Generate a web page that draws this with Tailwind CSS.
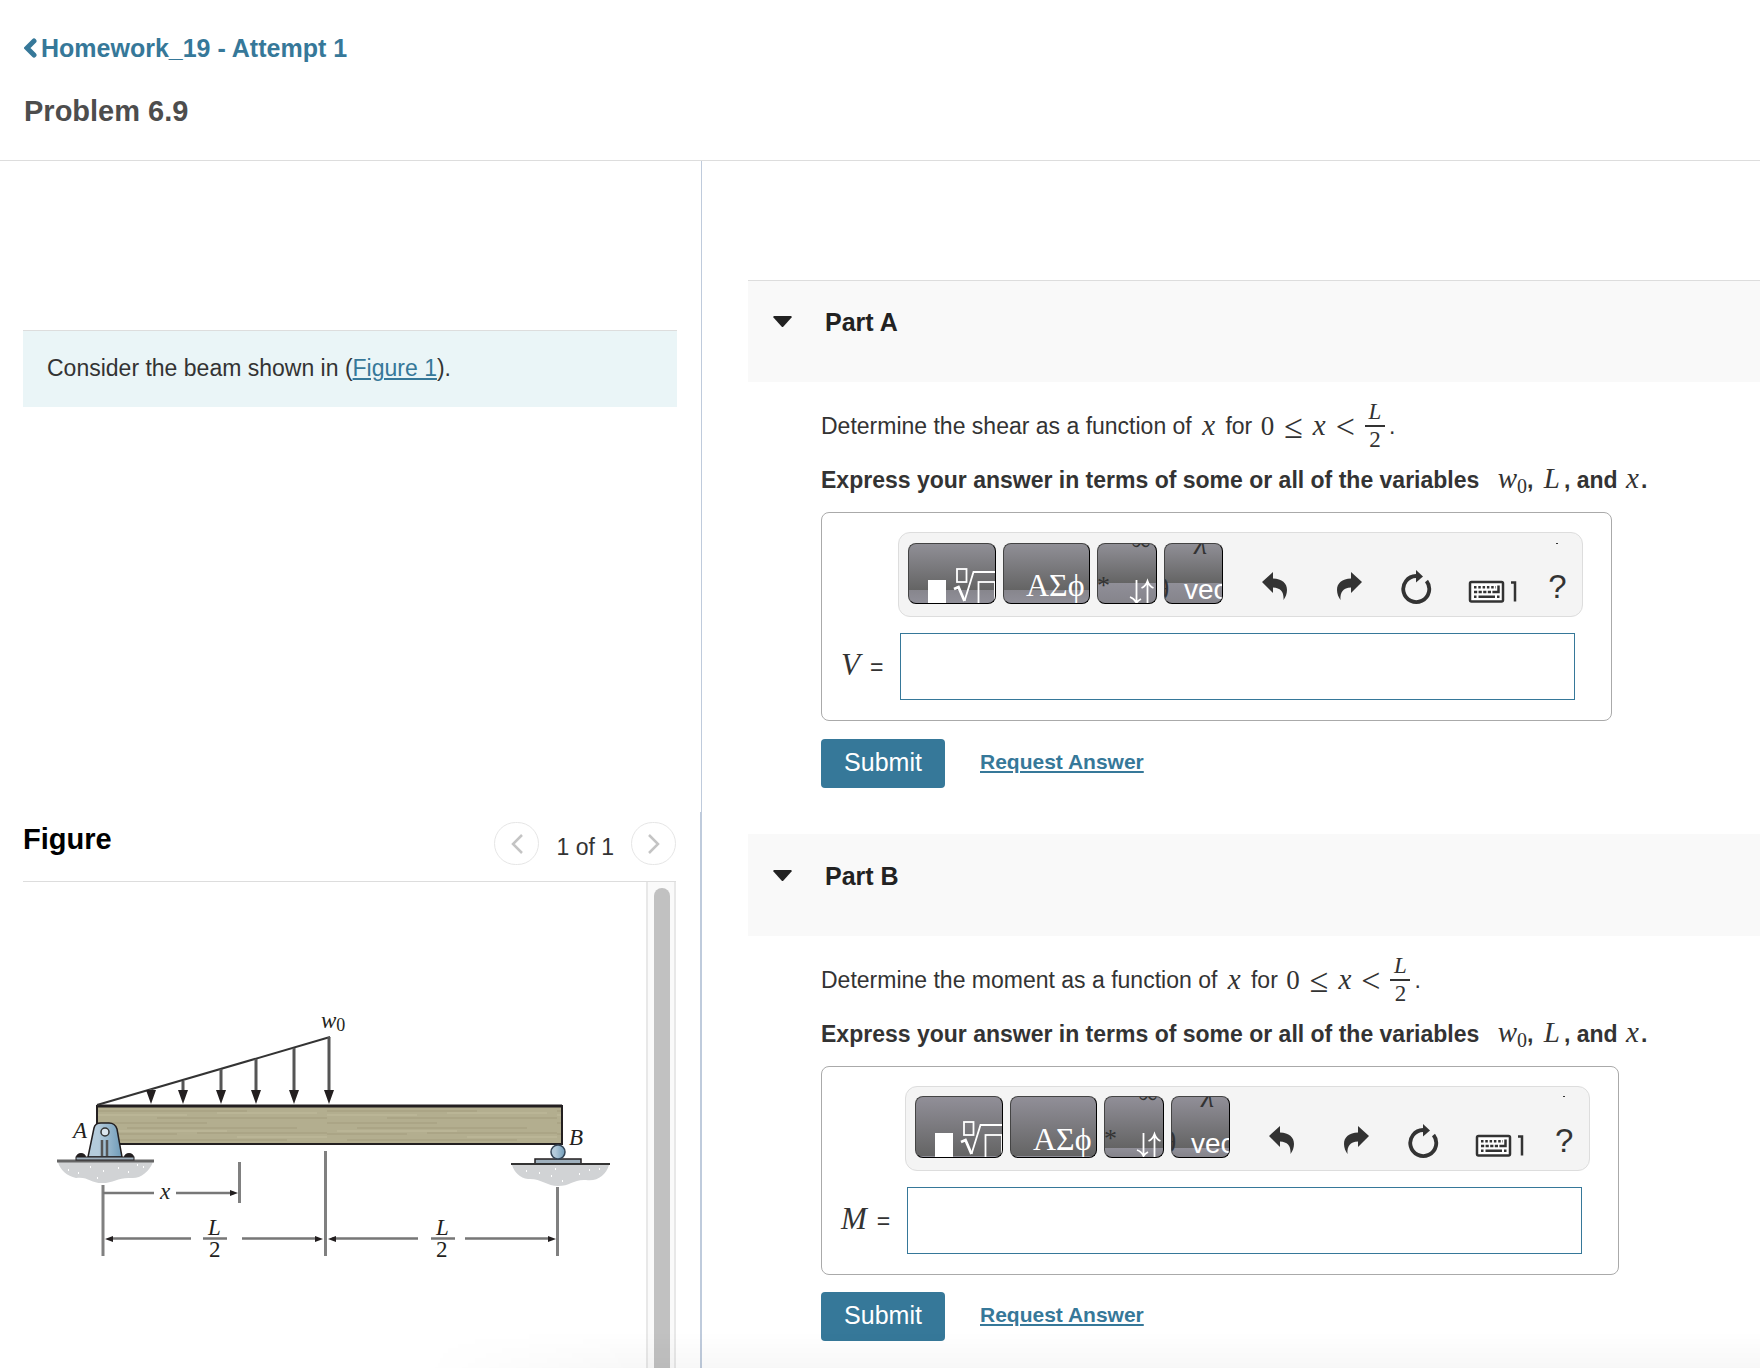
<!DOCTYPE html>
<html lang="en">
  <head>
    <meta charset="utf-8" />
    <meta name="viewport" content="width=device-width, initial-scale=1.0" />
    <title>Problem 6.9</title>
    <script src="https://cdn.jsdelivr.net/npm/@tailwindcss/browser@4"></script>
  </head>
  <body class="flex flex-col h-screen overflow-hidden bg-white font-['Liberation_Sans',Arial,sans-serif] text-[23px] text-[#333]">
    <!-- Shared icons -->
    <svg class="hidden">
      <symbol id="undo" viewBox="0 0 26 28">
        <path d="M0 10 11 0V6.500C20 7 25 11 25 18C25 22 23.500 25 21.500 28C22 20 19 16 11 15.500V21Z" fill="#333" />
      </symbol>
      <symbol id="reset" viewBox="0 0 32 36">
        <path d="M16 7A13 13 0 1 0 26.500 12" fill="none" stroke="#333" stroke-width="3.800" />
        <path d="M16 1 23 7.500 16 13.500Z" fill="#333" />
      </symbol>
      <symbol id="keyboard" viewBox="0 0 50 23">
        <rect x="2" y="2" width="33" height="19.500" rx="1.500" fill="#fff" stroke="#333" stroke-width="2.500" />
        <path d="M6 7.200H28" stroke="#333" stroke-width="2.500" stroke-dasharray="2.500 1.800" />
        <path d="M6 12H26" stroke="#333" stroke-width="2.500" stroke-dasharray="3.200 1.400" />
        <path d="M30.500 5.500V12H26" fill="none" stroke="#333" stroke-width="2.500" />
        <path d="M6 16.800H8.500M10.500 16.800H27M29 16.800H31.500" stroke="#333" stroke-width="2.500" />
        <path d="M43 2.500H47V21.500" fill="none" stroke="#333" stroke-width="2.500" />
      </symbol>
      <symbol id="root" viewBox="0 0 88 61">
        <rect x="19" y="36" width="18" height="26" fill="#fff" />
        <g fill="none" stroke="#fff" stroke-width="1.800">
          <rect x="48" y="25" width="9.500" height="13" />
          <path d="M88 28H64.500L55.500 57" />
          <path d="M45 45 49.500 43 55.500 57" stroke-width="2.800" />
          <rect x="69.500" y="38" width="16.500" height="26" />
        </g>
      </symbol>
      <symbol id="arrows" viewBox="0 0 60 61">
        <g fill="none" stroke="#fff" stroke-width="1.800">
          <path d="M38.500 36V59M32 53C35 54 37 56 38.500 59C39.500 57 41 56 43 55" />
          <path d="M49.500 61V37M43.500 44C46 43 48.500 40 49.500 37C50.500 40 53 43 55.500 44" />
        </g>
      </symbol>
    </svg>

    <header class="border-b border-[#ddd] px-6 pt-8 pb-[31px]">
      <a href="#" class="flex items-center gap-1 text-[25px] leading-8 font-bold text-[#367899]">
        <svg class="w-[13px] h-[22px]" viewBox="0 0 13 22"><path d="M10 4 3 11 10 18" fill="none" stroke="currentColor" stroke-width="5" stroke-linecap="round" /></svg>
        Homework_19 - Attempt 1
      </a>
      <h1 class="mt-[29px] text-[29px] leading-9 font-bold text-[#4d4d4d]">Problem 6.9</h1>
    </header>

    <main class="grid grid-cols-[702fr_1058fr] flex-1 min-h-0">
      <!-- Left side -->
      <div class="grid grid-rows-[651fr_556fr] min-h-0">
        <section class="border-r border-[#bfcbdc] pl-[23px] pr-6 pt-[169px]">
          <p class="border-t border-[#ddd] bg-[#eaf5f7] px-6 pt-[21px] pb-[23px] leading-8">
            Consider the beam shown in (<a href="#figure" class="text-[#367899] underline decoration-2 underline-offset-2">Figure 1</a>).
          </p>
        </section>

        <section id="figure" class="flex flex-col min-h-0 border-r-2 border-[#bfcbdc] pl-[23px] pr-6">
          <div class="flex items-start justify-between h-[69px] shrink-0 pt-[9px]">
            <h2 class="text-[29px] leading-9 font-bold text-black">Figure</h2>
            <div class="flex items-center gap-[17px] pt-px">
              <button aria-label="Previous figure" class="flex items-center justify-center w-[45px] h-[43px] border border-[#e6e6e6] rounded-full">
                <svg class="w-3 h-5" viewBox="0 0 12 20"><path d="M11 1 2 10 11 19" fill="none" stroke="#c4c4c4" stroke-width="2.500" /></svg>
              </button>
              <span class="pt-[7px]">1 of 1</span>
              <button aria-label="Next figure" class="flex items-center justify-center w-[45px] h-[43px] border border-[#e6e6e6] rounded-full">
                <svg class="w-3 h-5" viewBox="0 0 12 20"><path d="M1 1 10 10 1 19" fill="none" stroke="#c4c4c4" stroke-width="2.500" /></svg>
              </button>
            </div>
          </div>
          <div class="flex flex-1 min-h-0 border-t border-[#ddd]">
            <!-- Beam diagram -->
            <div class="flex-1 min-w-0 overflow-hidden">
              <svg class="w-full" viewBox="23 882 623 400" font-family="Liberation Serif, serif" font-size="23" font-style="italic" fill="#231f20">
                <defs>
                  <pattern id="wood" x="97" y="1106" width="230" height="39" patternUnits="userSpaceOnUse">
                    <rect width="230" height="39" fill="#b3ae8f" />
                    <path d="M0 5H150M60 12H230M0 17H110M30 22H200M0 28H80M100 27H230M20 34H190" stroke="#a39d7d" stroke-width="1" />
                    <path d="M0 9H90M120 7H220M10 25H130M140 31H230" stroke="#bdb898" stroke-width="1.500" />
                  </pattern>
                  <linearGradient id="steel"><stop offset="0.300" stop-color="#b4cbdb" /><stop offset="1" stop-color="#6f9bb8" /></linearGradient>
                </defs>
                <rect x="97" y="1106" width="465" height="38" fill="url(#wood)" stroke="#231f20" stroke-width="2" />
                <path d="M97 1106H562" stroke="#231f20" stroke-width="3" />

                <!-- Distributed load -->
                <path d="M97 1105 330 1037" stroke="#333" stroke-width="2" />
                <path d="M151 1089V1095M183 1081V1095M221 1069V1095M256 1059V1095M294 1048V1095M329 1037V1095" stroke="#555" stroke-width="3" />
                <path d="M146 1090h10l-5 14zM178 1090h10l-5 14zM216 1090h10l-5 14zM251 1090h10l-5 14zM289 1090h10l-5 14zM324 1090h10l-5 14z" />
                <text x="321" y="1028">w<tspan font-size="18" font-style="normal" dy="3">0</tspan></text>

                <!-- Pin support -->
                <path d="M58 1162H153C149 1172 140 1179 131 1178C119 1177 114 1183 102 1183C91 1183 87 1176 76 1178C67 1176 60 1170 58 1162Z" fill="#d1d3d5" />
                <path d="M68 1170h1M78 1173h1M90 1167h1M97 1178h1M103 1171h1M118 1168h1M128 1172h1M137 1165h1M143 1167h1" stroke="#fff" stroke-width="2" />
                <path d="M57 1161H154" stroke="#666" stroke-width="3" />
                <path d="M76 1157a5 4 0 0 1 10 0zM124 1157a5 4 0 0 1 10 0z" />
                <path d="M88 1157 94 1128Q95 1123 101 1123H109Q115 1123 117 1129L122 1157Z" fill="url(#steel)" stroke="#231f20" stroke-width="1.500" />
                <circle cx="105" cy="1132" r="4" fill="#dce6ee" stroke="#333" stroke-width="1.500" />
                <path d="M102 1156V1140M107 1156V1140" stroke="#555" stroke-width="2.500" />
                <rect x="76" y="1157" width="58" height="3" fill="#9fb0bd" stroke="#231f20" />
                <text x="73" y="1138">A</text>

                <!-- Roller support -->
                <path d="M512 1165H609C606 1175 597 1182 586 1180C574 1179 570 1186 558 1186C547 1186 540 1178 528 1179C520 1178 514 1172 512 1165Z" fill="#d1d3d5" />
                <path d="M526 1171h1M539 1173h1M555 1169h1M551 1176h1M562 1181h1M579 1174h1M589 1170h1M599 1169h1" stroke="#fff" stroke-width="2" />
                <rect x="535" y="1159" width="46" height="5" fill="#9fb0bd" stroke="#231f20" stroke-width="1.500" />
                <path d="M511 1164H610" stroke="#333" stroke-width="2" />
                <circle cx="558" cy="1152" r="7" fill="url(#steel)" stroke="#345" stroke-width="1.500" />
                <text x="569" y="1145">B</text>

                <!-- Dimensions -->
                <path d="M103 1185V1256M239.500 1162V1203M325.500 1151V1256M557.500 1187V1256" stroke="#808080" stroke-width="3" />
                <path d="M103 1193H154M176 1193H234M110 1238.500H191M242 1238.500H318M332 1238.500H418M465 1238.500H551" stroke="#777" stroke-width="2.500" />
                <path d="M238 1193l-8-3v6zM105 1239l8-3v6zM323 1239l-8-3v6zM328 1239l8-3v6zM556 1239l-8-3v6z" />
                <path d="M203 1238.500H227M431 1238.500H455" stroke="#777" stroke-width="2.500" />
                <text x="160" y="1199">x</text>
                <text x="208" y="1235">L</text>
                <text x="209" y="1257" font-style="normal">2</text>
                <text x="436" y="1235">L</text>
                <text x="436" y="1257" font-style="normal">2</text>
              </svg>
            </div>
            <!-- Scrollbar -->
            <div class="flex w-[30px] border-x-2 border-[#e8e8e8] bg-[#fafafa] pl-[6px] pt-[6px]">
              <div class="w-4 rounded-t-full bg-[#c1c1c1]"></div>
            </div>
          </div>
        </section>
      </div>

      <!-- Right side -->
      <div class="min-h-0 overflow-hidden pl-[46px] pt-[119px]">
        <section>
          <h2 class="flex h-[102px] gap-[33px] border-t border-[#ddd] bg-[#f9f9f9] pl-[25px] pt-[25px] text-[25px] leading-8 font-bold text-[#222]">
            <svg class="w-[19px] h-[11px] mt-[10px]" viewBox="0 0 19 11"><path d="M1 0H18L19 1 10 11H9L0 1Z" fill="#222" /></svg>
            Part A
          </h2>
          <div class="pl-[73px]">
            <p class="flex items-center h-[72px] mt-2 whitespace-pre">Determine the shear as a function of <i class="px-1 font-['Liberation_Serif',serif] text-[29px]">x</i> for <span class="flex items-center gap-[10px] pl-[2px] pr-1 font-['Liberation_Serif',serif] text-[27px]"><span>0</span><span class="text-[34px]">≤</span><i class="text-[29px]">x</i><span class="text-[34px]">&lt;</span><span class="flex flex-col items-center w-5 text-[23px] leading-[26px]"><i class="w-full border-b-2 border-[#333] text-center">L</i><span>2</span></span></span>.</p>
            <p class="leading-9 font-bold whitespace-nowrap">Express your answer in terms of some or all of the variables <span class="ml-3 font-['Liberation_Serif',serif] text-[29px] leading-none font-normal"><i>w</i><sub class="text-[20px]">0</sub></span>, <i class="mx-1 font-['Liberation_Serif',serif] text-[29px] leading-none font-normal">L</i>, and <i class="mx-[2px] font-['Liberation_Serif',serif] text-[29px] leading-none font-normal">x</i>.</p>

            <form class="grid grid-cols-[auto_685px] gap-x-[15px] gap-y-4 w-fit mt-[14px] border border-[#aaa] rounded-lg pl-[19px] pr-7 pt-[19px] pb-5">
              <div class="col-start-2 flex h-[85px] border border-[#ddd] rounded-xl bg-[#f4f4f4] pl-[9px] pt-[10px]">
                <div class="flex gap-[7px] mr-[15px]">
                  <button type="button" aria-label="Templates" class="w-[88px] h-[61px] overflow-hidden border border-black border-t-[#444] border-l-[#444] rounded-lg bg-[linear-gradient(#908f96_0,#646464_46px,#87868d_46px,#908f98_100%)]">
                    <svg class="w-full h-full"><use href="#root" width="88" height="61" /></svg>
                  </button>
                  <button type="button" class="w-[87px] h-[61px] overflow-hidden border border-black border-t-[#444] border-l-[#444] rounded-lg bg-[linear-gradient(#908f96_0,#646464_46px,#87868d_46px,#908f98_100%)]">
                    <svg class="w-full h-full" font-family="Liberation Serif, serif" font-size="32" fill="#fff"><text x="22" y="52">ΑΣϕ</text></svg>
                  </button>
                  <button type="button" aria-label="Arrows" class="w-[60px] h-[61px] overflow-hidden border border-black border-t-[#444] border-l-[#444] rounded-lg bg-[linear-gradient(#908f96_0,#646464_39px,#908f98_39px,#85848b_100%)]">
                    <svg class="w-full h-full" font-family="Liberation Serif, serif" font-size="28" fill="#333"><text x="33" y="6">∞</text><text x="-1" y="50" font-size="26">*</text><use href="#arrows" width="60" height="61" /></svg>
                  </button>
                  <button type="button" class="w-[59px] h-[61px] overflow-hidden border border-black border-t-[#444] border-l-[#444] rounded-lg bg-[linear-gradient(#908f96_0,#646464_39px,#908f98_39px,#85848b_100%)]">
                    <svg class="w-full h-full" font-family="Liberation Serif, serif" font-size="30" fill="#333"><text x="29" y="10" font-style="italic">λ</text><text x="-10" y="55">θ</text><text x="19" y="55" font-family="Liberation Sans, sans-serif" font-size="28" fill="#fff">vec</text></svg>
                  </button>
                </div>
                <button type="button" aria-label="Undo" class="flex justify-center w-[74px] pt-[29px]"><svg class="w-[26px] h-7"><use href="#undo" /></svg></button>
                <button type="button" aria-label="Redo" class="flex justify-center w-[73px] pt-[29px]"><svg class="w-[26px] h-7 -scale-x-100"><use href="#undo" /></svg></button>
                <button type="button" aria-label="Reset" class="flex justify-center w-[62px] pt-[26px]"><svg class="w-8 h-9"><use href="#reset" /></svg></button>
                <button type="button" aria-label="Keyboard shortcuts" class="flex justify-center w-[92px] pt-[37px]"><svg class="w-[50px] h-[23px]"><use href="#keyboard" /></svg></button>
                <button type="button" class="flex flex-col items-center w-9 text-[33px] leading-10"><span class="w-[2px] h-px mb-[23px] bg-[#333]"></span>?</button>
              </div>
              <label for="answer-v" class="flex items-center gap-[10px]"><i class="pb-[2px] font-['Liberation_Serif',serif] text-[31px]">V</i><span class="pt-[2px]">=</span></label>
              <input id="answer-v" type="text" class="h-[67px] ml-[2px] mr-2 border border-[#367899] bg-white px-3" />
            </form>

            <div class="flex gap-[35px] mt-[18px]">
              <button class="w-[124px] h-[49px] rounded bg-[#367899] pb-[2px] text-[25px] text-white">Submit</button>
              <a href="#" class="pt-[5px] text-[21px] leading-9 font-bold text-[#367899] underline decoration-2 underline-offset-2">Request Answer</a>
            </div>
          </div>
        </section>

        <section class="mt-[46px]">
          <h2 class="flex h-[102px] gap-[33px] bg-[#f9f9f9] pl-[25px] pt-[26px] text-[25px] leading-8 font-bold text-[#222]">
            <svg class="w-[19px] h-[11px] mt-[10px]" viewBox="0 0 19 11"><path d="M1 0H18L19 1 10 11H9L0 1Z" fill="#222" /></svg>
            Part B
          </h2>
          <div class="pl-[73px]">
            <p class="flex items-center h-[72px] mt-2 whitespace-pre">Determine the moment as a function of <i class="px-1 font-['Liberation_Serif',serif] text-[29px]">x</i> for <span class="flex items-center gap-[10px] pl-[2px] pr-1 font-['Liberation_Serif',serif] text-[27px]"><span>0</span><span class="text-[34px]">≤</span><i class="text-[29px]">x</i><span class="text-[34px]">&lt;</span><span class="flex flex-col items-center w-5 text-[23px] leading-[26px]"><i class="w-full border-b-2 border-[#333] text-center">L</i><span>2</span></span></span>.</p>
            <p class="leading-9 font-bold whitespace-nowrap">Express your answer in terms of some or all of the variables <span class="ml-3 font-['Liberation_Serif',serif] text-[29px] leading-none font-normal"><i>w</i><sub class="text-[20px]">0</sub></span>, <i class="mx-1 font-['Liberation_Serif',serif] text-[29px] leading-none font-normal">L</i>, and <i class="mx-[2px] font-['Liberation_Serif',serif] text-[29px] leading-none font-normal">x</i>.</p>

            <form class="grid grid-cols-[auto_685px] gap-x-[15px] gap-y-4 w-fit mt-[14px] border border-[#aaa] rounded-lg pl-[19px] pr-7 pt-[19px] pb-5">
              <div class="col-start-2 flex h-[85px] border border-[#ddd] rounded-xl bg-[#f4f4f4] pl-[9px] pt-[9px]">
                <div class="flex gap-[7px] mr-[15px]">
                  <button type="button" aria-label="Templates" class="w-[88px] h-[62px] overflow-hidden border border-black border-t-[#444] border-l-[#444] rounded-lg bg-[linear-gradient(#918f98_0,#646464_59px,#908f98_59px)]">
                    <svg class="w-full h-full"><use href="#root" width="88" height="61" /></svg>
                  </button>
                  <button type="button" class="w-[87px] h-[62px] overflow-hidden border border-black border-t-[#444] border-l-[#444] rounded-lg bg-[linear-gradient(#918f98_0,#646464_59px,#908f98_59px)]">
                    <svg class="w-full h-full" font-family="Liberation Serif, serif" font-size="32" fill="#fff"><text x="22" y="53">ΑΣϕ</text></svg>
                  </button>
                  <button type="button" aria-label="Arrows" class="w-[60px] h-[62px] overflow-hidden border border-black border-t-[#444] border-l-[#444] rounded-lg bg-[linear-gradient(#918f98_0,#646464_51px,#908f98_51px,#85848b_100%)]">
                    <svg class="w-full h-full" font-family="Liberation Serif, serif" font-size="28" fill="#333"><text x="33" y="6">∞</text><text x="-1" y="50" font-size="26">*</text><use href="#arrows" width="60" height="61" /></svg>
                  </button>
                  <button type="button" class="w-[59px] h-[62px] overflow-hidden border border-black border-t-[#444] border-l-[#444] rounded-lg bg-[linear-gradient(#918f98_0,#646464_51px,#908f98_51px,#85848b_100%)]">
                    <svg class="w-full h-full" font-family="Liberation Serif, serif" font-size="30" fill="#333"><text x="29" y="10" font-style="italic">λ</text><text x="-10" y="55">θ</text><text x="19" y="56" font-family="Liberation Sans, sans-serif" font-size="28" fill="#fff">vec</text></svg>
                  </button>
                </div>
                <button type="button" aria-label="Undo" class="flex justify-center w-[74px] pt-[30px]"><svg class="w-[26px] h-7"><use href="#undo" /></svg></button>
                <button type="button" aria-label="Redo" class="flex justify-center w-[73px] pt-[30px]"><svg class="w-[26px] h-7 -scale-x-100"><use href="#undo" /></svg></button>
                <button type="button" aria-label="Reset" class="flex justify-center w-[62px] pt-[27px]"><svg class="w-8 h-9"><use href="#reset" /></svg></button>
                <button type="button" aria-label="Keyboard shortcuts" class="flex justify-center w-[92px] pt-[38px]"><svg class="w-[50px] h-[23px]"><use href="#keyboard" /></svg></button>
                <button type="button" class="flex flex-col items-center w-9 text-[33px] leading-10"><span class="w-[2px] h-px mb-6 bg-[#333]"></span>?</button>
              </div>
              <label for="answer-m" class="flex items-center gap-[10px]"><i class="pb-[2px] font-['Liberation_Serif',serif] text-[31px]">M</i><span class="pt-[2px]">=</span></label>
              <input id="answer-m" type="text" class="h-[67px] ml-[2px] mr-2 border border-[#367899] bg-white px-3" />
            </form>

            <div class="flex gap-[35px] mt-[17px]">
              <button class="w-[124px] h-[49px] rounded bg-[#367899] pb-[2px] text-[25px] text-white">Submit</button>
              <a href="#" class="pt-[5px] text-[21px] leading-9 font-bold text-[#367899] underline decoration-2 underline-offset-2">Request Answer</a>
            </div>
          </div>
        </section>
      </div>
    </main>

    <!-- Fade along the bottom edge -->
    <div class="pointer-events-none fixed right-0 bottom-0 left-[24%] h-9 bg-linear-to-b from-transparent to-black/3 mask-[linear-gradient(to_right,transparent,black_16%)]"></div>
  </body>
</html>
